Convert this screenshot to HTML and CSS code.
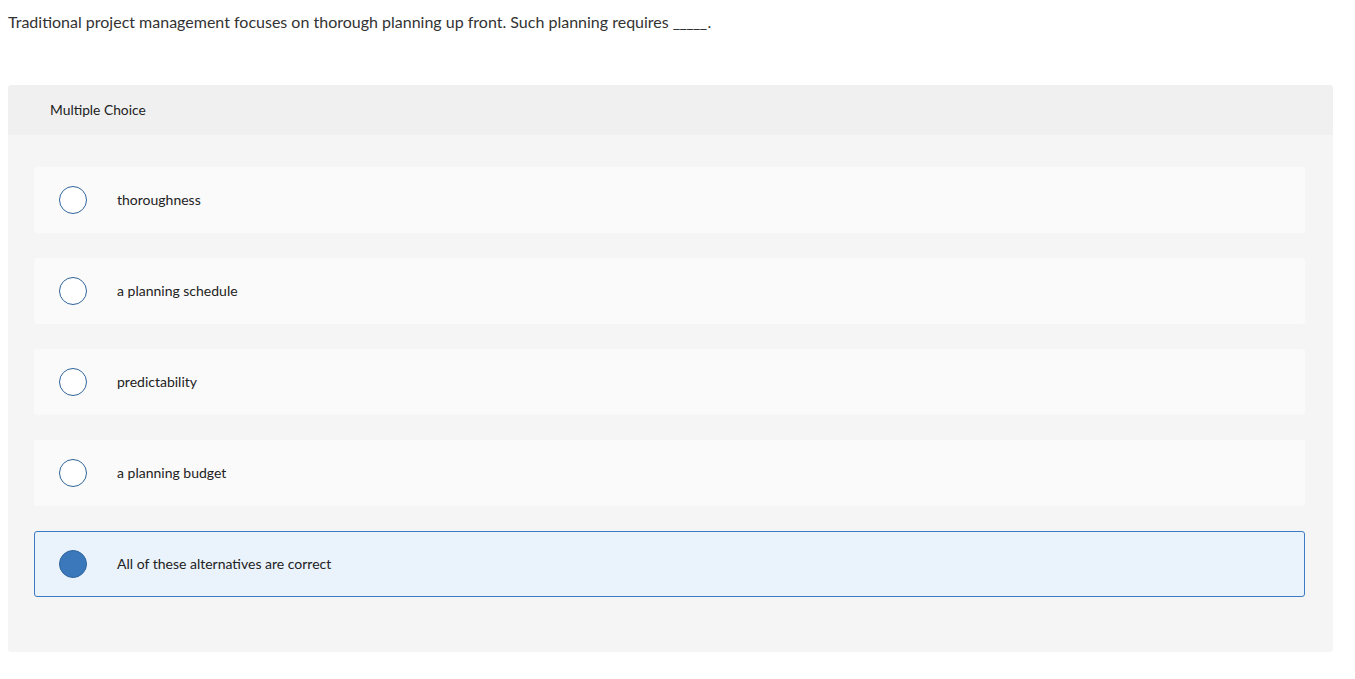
FILE: index.html
```html
<!DOCTYPE html>
<html>
<head>
<meta charset="utf-8">
<link rel="stylesheet" href="styles.css">
</head>
<body>
<p class="question">Traditional project management focuses on thorough planning up front. Such planning requires <span class="blank">_____</span>.</p>
<div class="panel">
  <div class="panel-head">Multiple Choice</div>
  <div class="panel-body">
    <div class="option"><span class="radio"></span><span class="label">thoroughness</span></div>
    <div class="option"><span class="radio"></span><span class="label">a planning schedule</span></div>
    <div class="option"><span class="radio"></span><span class="label">predictability</span></div>
    <div class="option"><span class="radio"></span><span class="label">a planning budget</span></div>
    <div class="option selected"><span class="radio"></span><span class="label">All of these alternatives are correct</span></div>
  </div>
</div>
</body>
</html>
```
FILE: styles.css
```css
body {
  margin: 0;
  padding: 0 22px 0 8px;
  font-family: "Lato", "Liberation Sans", sans-serif;
  color: #333;
  background: #fff;
}
.question {
  margin: 11px 0 0;
  font-size: 16px;
  line-height: 21px;
  color: #333;
}
.blank {
  letter-spacing: -0.6px;
  margin-right: 1px;
}
.panel {
  margin-top: 53px;
  border-radius: 3px;
  overflow: hidden;
}
.panel-head {
  background: #f0f0f0;
  height: 50px;
  box-sizing: border-box;
  padding-bottom: 2px;
  display: flex;
  align-items: center;
  padding-left: 42px;
  font-size: 13.8px;
  color: #222;
}
.panel-body {
  background: #f5f5f5;
  padding: 32px 28px 55px 26px;
  display: flex;
  flex-direction: column;
  gap: 25px;
}
.option {
  height: 66px;
  box-sizing: border-box;
  background: #fafafa;
  border-radius: 3px;
  display: flex;
  align-items: center;
  padding-left: 24px;
  border: 1px solid transparent;
}
.radio {
  width: 28px;
  height: 28px;
  box-sizing: border-box;
  border: 1.5px solid #2f649c;
  border-radius: 50%;
  background: #fff;
  flex: none;
}
.label {
  margin-left: 30px;
  padding-bottom: 2px;
  font-size: 14px;
  color: #222;
}
.option.selected {
  background: #eaf2fb;
  border-color: #3b7bc4;
}
.option.selected .radio {
  background: #3a78bb;
  border-color: #2f649c;
}
```
